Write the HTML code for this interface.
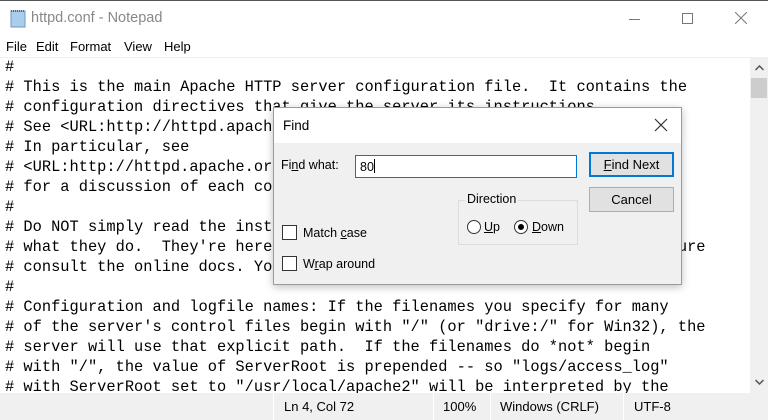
<!DOCTYPE html>
<html><head><meta charset="utf-8"><style>
*{margin:0;padding:0;box-sizing:border-box}
body{width:768px;height:420px;overflow:hidden;background:#fff;font-family:"Liberation Sans",sans-serif;position:relative;color:#000}
.abs{position:absolute}
#title{left:0;top:0;width:768px;height:36px;background:#fff;border-top:1px solid #555}
#menu{left:0;top:36px;width:768px;height:21px;font-size:13px;color:#000}
#menu span{position:absolute;top:3px}
#edit{left:0;top:57px;width:750px;height:336px;border-top:1px solid #f0f0f0;overflow:hidden}
pre{font-family:"Liberation Mono",monospace;font-size:15.36px;line-height:20px;position:absolute;left:5px;top:-1px;color:#000}
#sb{left:750px;top:57px;width:18px;height:336px;background:#f0f0f0}
#status{left:0;top:393px;width:768px;height:27px;background:#f0f0f0;font-size:13px;color:#000}
#status span{position:absolute;top:6px}
.sep{position:absolute;top:0;width:1px;height:27px;background:#fff}
#dlg{left:273px;top:107px;width:409px;height:178px;background:#f0f0f0;border:1px solid #9a9a9a;box-shadow:0 2px 8px rgba(0,0,0,.25);font-size:12.5px}
#dt{left:0;top:0;width:407px;height:35px;background:#fff}
.btn{position:absolute;width:85px;height:25px;background:#e1e1e1;border:1px solid #adadad;text-align:center;line-height:23px;font-size:13px}
.cb{position:absolute;width:15px;height:15px;border:1px solid #333;background:#fff}
.rb{position:absolute;width:14px;height:14px;border:1px solid #333;border-radius:50%;background:#fff}
u{text-decoration:underline}
</style></head><body>
<div id="title" class="abs">
 <svg class="abs" style="left:8px;top:8px" width="20" height="20" viewBox="0 0 20 20"><rect x="3" y="2" width="14" height="16" fill="#a9cdea" stroke="#6e97c0"/><path d="M3 2h14" stroke="#4a6f95" stroke-width="2" stroke-dasharray="1 1"/></svg>
 <span class="abs" style="left:31px;top:9px;font-size:14.5px;color:#888">httpd.conf - Notepad</span>
 <div class="abs" style="left:629px;top:18px;width:11px;height:1px;background:#777"></div>
 <div class="abs" style="left:682px;top:12px;width:11px;height:11px;border:1px solid #777"></div>
 <svg class="abs" style="left:735px;top:11px" width="12" height="12"><path d="M0 0L12 12M12 0L0 12" stroke="#777" stroke-width="1"/></svg>
</div>
<div id="menu" class="abs"><span style="left:6px">File</span><span style="left:36px">Edit</span><span style="left:70px">Format</span><span style="left:124px">View</span><span style="left:164px">Help</span></div>
<div id="edit" class="abs"><pre>#
# This is the main Apache HTTP server configuration file.  It contains the
# configuration directives that give the server its instructions.
# See &lt;URL:http://httpd.apache.org/docs/2.4/&gt; for detailed information.
# In particular, see
# &lt;URL:http://httpd.apache.org/docs/2.4/mod/directives.html&gt;
# for a discussion of each configuration directive.
#
# Do NOT simply read the instructions in here without understanding
# what they do.  They're here only as hints or reminders.  If you are unsure
# consult the online docs. You have been warned.
#
# Configuration and logfile names: If the filenames you specify for many
# of the server's control files begin with "/" (or "drive:/" for Win32), the
# server will use that explicit path.  If the filenames do *not* begin
# with "/", the value of ServerRoot is prepended -- so "logs/access_log"
# with ServerRoot set to "/usr/local/apache2" will be interpreted by the</pre></div>
<div id="sb" class="abs">
 <svg class="abs" style="left:5px;top:8px" width="9" height="6"><path d="M0.5 5L4.5 1L8.5 5" stroke="#555" fill="none" stroke-width="1.5"/></svg>
 <div class="abs" style="left:1px;top:21px;width:16px;height:20px;background:#cdcdcd"></div>
 <svg class="abs" style="left:5px;top:322px" width="9" height="6"><path d="M0.5 1L4.5 5L8.5 1" stroke="#555" fill="none" stroke-width="1.5"/></svg>
</div>
<div id="status" class="abs">
 <div class="sep" style="left:273px"></div><div class="sep" style="left:433px"></div><div class="sep" style="left:490px"></div><div class="sep" style="left:623px"></div>
 <span style="left:284px">Ln 4, Col 72</span><span style="left:443px">100%</span><span style="left:500px">Windows (CRLF)</span><span style="left:634px">UTF-8</span>
</div>
<div id="dlg" class="abs">
 <div id="dt" class="abs"><span class="abs" style="left:9px;top:10px;font-size:13.5px">Find</span>
  <svg class="abs" style="left:380px;top:10px" width="14" height="14"><path d="M1 1L13 13M13 1L1 13" stroke="#333" stroke-width="1.2"/></svg></div>
 <span class="abs" style="left:7px;top:50px">Fi<u>n</u>d what:</span>
 <div class="abs" style="left:81px;top:47px;width:222px;height:23px;background:#fff;border:1px solid #0078d7"></div>
 <span class="abs" style="left:86px;top:51px">80<span style="display:inline-block;width:1px;height:14px;background:#000;vertical-align:-2px"></span></span>
 <div class="btn" style="left:315px;top:44px;border:2px solid #0078d7;line-height:21px"><u>F</u>ind Next</div>
 <div class="btn" style="left:315px;top:79px">Cancel</div>
 <div class="abs" style="left:184px;top:92px;width:120px;height:45px;border:1px solid #dcdcdc"></div>
 <span class="abs" style="left:191px;top:84px;background:#f0f0f0;padding:0 2px">Direction</span>
 <div class="rb" style="left:193px;top:112px"></div><span class="abs" style="left:210px;top:112px"><u>U</u>p</span>
 <div class="rb" style="left:240px;top:112px"><div style="position:absolute;left:3px;top:3px;width:6px;height:6px;border-radius:50%;background:#000"></div></div><span class="abs" style="left:258px;top:112px"><u>D</u>own</span>
 <div class="cb" style="left:8px;top:117px"></div><span class="abs" style="left:29px;top:118px">Match <u>c</u>ase</span>
 <div class="cb" style="left:8px;top:148px"></div><span class="abs" style="left:29px;top:149px">W<u>r</u>ap around</span>
</div>
</body></html>
